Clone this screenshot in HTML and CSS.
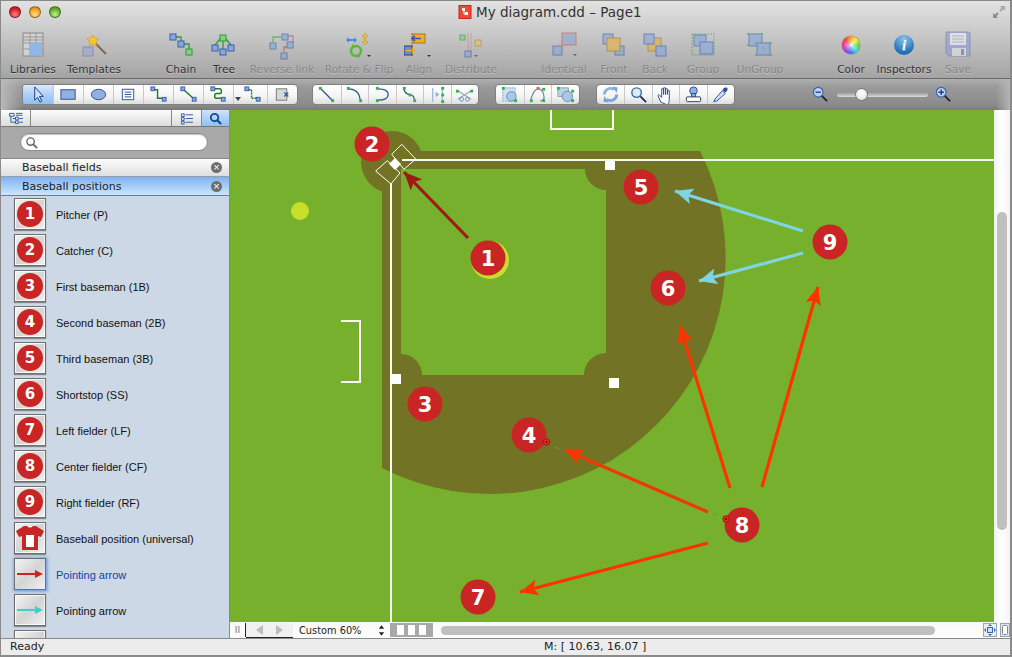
FILE: index.html
```html
<!DOCTYPE html>
<html lang="en">
<head>
<meta charset="utf-8">
<title>My diagram.cdd - Page1</title>
<link rel="stylesheet" href="styles.css">
</head>
<body>
<div class="window">
  <header class="chrome">
    <div class="titlebar">
      <span class="light red"></span><span class="light yellow"></span><span class="light green"></span>
      <svg class="docicon" viewBox="0 0 14 14"><rect x="1" y="0.5" width="12" height="13" fill="#ee4a33" stroke="#c22"/><path d="M4 3h3v3H4zM7 7h3v3H7z" fill="#fff"/><path d="M6 6v3h1" stroke="#fff" fill="none"/></svg>
      <span class="doctitle">My diagram.cdd – Page1</span>
      <svg class="expand" viewBox="0 0 14 14"><path d="M8 1h5v5l-1.7-1.7-2.5 2.5-1.6-1.6 2.5-2.5z" fill="#a9a9a9"/><path d="M6 13H1V8l1.7 1.7 2.5-2.5 1.6 1.6-2.500 2.500z" fill="#8c8c8c"/></svg>
    </div>
    <div class="tools">
      <div class="tool t-lib"><svg viewBox="0 0 30 30"><rect x="5" y="3" width="20" height="23" fill="#d2d2d2" stroke="#8a8a8a"/><path d="M5 7h20M5 10h20M5 13h20M12 3v23M18 3v23M5 19h20" stroke="#999" fill="none"/><path d="M12 13h6v6h-6zM18 13h6v6h-6zM12 19h6v6h-6zM18 19h6v6h-6z" fill="#8fb6e8"/></svg><span>Libraries</span></div>
      <div class="tool t-tem"><svg viewBox="0 0 30 30"><rect x="4" y="17" width="10" height="9" fill="#a5aecb" stroke="#8a90a8"/><path d="M15 12l12 12" stroke="#7a6a55" stroke-width="2"/><path d="M14 5l2 3 4 1-3 3 .5 4-3.500-2-3.500 2 .5-4-3-3 4-1z" fill="#f5c430" stroke="#c88a10" stroke-width=".5"/><circle cx="21" cy="5" r="1" fill="#9cd"/><circle cx="24" cy="11" r="1" fill="#9cd"/></svg><span>Templates</span></div>
      <div class="tool t-cha"><svg viewBox="0 0 30 30"><path d="M10 7h5v5M18 14h5v5" fill="none" stroke="#2f9a3a" stroke-width="1.300"/><rect class="bl" x="4" y="4" width="6" height="6"/><rect class="bl" x="12" y="11" width="6" height="6"/><rect class="gr" x="20" y="19" width="6" height="6"/></svg><span>Chain</span></div>
      <div class="tool t-tre"><svg viewBox="0 0 30 30"><path d="M14 11v8M11 9L6 15M17 9l5 6" fill="none" stroke="#2f9a3a" stroke-width="1.300"/><rect class="gr" x="11" y="5" width="6" height="6"/><rect class="bl" x="3" y="15" width="6" height="6"/><rect class="bl" x="11" y="19" width="6" height="6"/><rect class="bl" x="19" y="15" width="6" height="6"/></svg><span>Tree</span></div>
      <div class="tool off t-rev"><svg viewBox="0 0 30 30"><path d="M6 12V7h8" fill="none" stroke="#3aa15a" stroke-width="1.300"/><path d="M21 6h5v7" fill="none" stroke="#c04fa0" stroke-width="1.300"/><path d="M24 17h-7v5" fill="none" stroke="#d0502a" stroke-width="1.300"/><rect class="bl" x="3" y="13" width="6" height="6"/><rect class="bl" x="15" y="4" width="6" height="6"/><rect class="bl" x="20" y="12" width="6" height="6"/><rect class="bl" x="14" y="23" width="6" height="6"/></svg><span>Reverse link</span></div>
      <div class="tool dim t-rot"><svg viewBox="0 0 30 30"><path d="M2 10l3-3v2h5V7l3 3-3 3v-2H5v2z" fill="#4a8ad8"/><path d="M21 3l3 3h-2v6h2l-3 3-3-3h2V6h-2z" fill="#f0c040" stroke="#b98a20" stroke-width=".5"/><circle cx="12" cy="21" r="5" fill="none" stroke="#5cb83c" stroke-width="2.500"/><path d="M8 14l4 2-3 3zM16 28l-4-2 3-3z" fill="#5cb83c"/><path class="tri" d="M23 25h4l-2 2z"/></svg><span>Rotate &amp; Flip</span></div>
      <div class="tool dim t-ali"><svg viewBox="0 0 30 30"><path d="M8 3v24" stroke="#d04040" stroke-dasharray="2 1"/><rect x="9" y="4" width="12" height="9" fill="#f0b020" stroke="#a87a10"/><path d="M17 8.500H8M11 6l-3 2.500 3 2.500" fill="none" stroke="#2a5faa" stroke-width="1.500"/><rect x="0" y="16" width="8" height="9" fill="#6a8fd0" stroke="#345"/><path d="M2 20.500h8M8 18l3 2.500-3 2.500" fill="none" stroke="#f0b020" stroke-width="1.500"/><path class="tri" d="M23 25h4l-2 2z"/></svg><span>Align</span></div>
      <div class="tool off t-dis"><svg viewBox="0 0 30 30"><path d="M12 3v24M15 3v24" stroke="#c88" fill="none"/><rect class="gr" x="4" y="5" width="5" height="5"/><rect x="19" y="10" width="6" height="6" fill="#e8c060" stroke="#b08a30"/><rect class="bl" x="9" y="21" width="6" height="6"/><path class="tri" d="M18 25h4l-2 2z"/></svg><span>Distribute</span></div>
      <div class="tool off t-ide"><svg viewBox="0 0 30 30"><path d="M8 21L20 8" stroke="#e5b090" stroke-width="8"/><rect x="13" y="3" width="14" height="12" fill="#8fa8d0" stroke="#c05a4a"/><rect class="bl" x="4" y="16" width="9" height="9"/><path class="tri" d="M24 24h4l-2 2z"/></svg><span>Identical</span></div>
      <div class="tool off t-fro"><svg viewBox="0 0 30 30"><rect class="bl" x="4" y="4" width="10" height="10"/><rect class="bl" x="16" y="16" width="9" height="9"/><rect x="8" y="8" width="13" height="13" fill="#e8b040" stroke="#a87a10"/></svg><span>Front</span></div>
      <div class="tool off t-bac"><svg viewBox="0 0 30 30"><rect x="8" y="8" width="13" height="13" fill="#e8b040" stroke="#a87a10"/><rect class="bl" x="4" y="4" width="10" height="10"/><rect class="bl" x="16" y="16" width="10" height="10"/></svg><span>Back</span></div>
      <div class="tool off t-gro"><svg viewBox="0 0 30 30"><rect x="4" y="4" width="22" height="21" fill="none" stroke="#3fa84a" stroke-dasharray="2 1"/><rect class="bl" x="6" y="5" width="12" height="11"/><rect class="bl" x="12" y="12" width="13" height="12"/></svg><span>Group</span></div>
      <div class="tool off t-ung"><svg viewBox="0 0 30 30"><rect class="bl" x="4" y="4" width="13" height="12"/><rect class="bl" x="12" y="13" width="13" height="12"/><path d="M2 4h3M15 4h3M2 15h3M10 13h3M24 13h3M10 25h3M24 25h3" stroke="#3fa84a" stroke-width="2"/><circle cx="18" cy="18" r="1" fill="#3a3"/></svg><span>UnGroup</span></div>
      <div class="tool t-col"><span class="wheel"></span><span>Color</span></div>
      <div class="tool t-ins"><span class="info">i</span><span>Inspectors</span></div>
      <div class="tool off t-sav"><svg viewBox="0 0 30 30"><path d="M3 2h23l1 1v23H6l-3-3z" fill="#8c9bd6" stroke="#6a78b5"/><rect x="7" y="3" width="16" height="12" fill="#eef0f5"/><path d="M9 6h12M9 9h12M9 12h12" stroke="#9aa6c8"/><rect x="9" y="18" width="14" height="8" fill="#dfe3ee"/><rect x="18" y="19" width="3" height="6" fill="#7080b0"/></svg><span>Save</span></div>
    </div>
  </header>

  <div class="formatbar">
    <div class="fgroup">
      <span class="fb sel"><svg viewBox="0 0 20 20"><path d="M6 2v14l3-3 2.500 5 2-1-2.500-5h4z" fill="#cfe0f7" stroke="#1c3b8c"/></svg></span>
      <span class="fb"><svg viewBox="0 0 20 20"><rect x="2" y="5" width="15" height="10" fill="#8fb0e0" stroke="#2a4f95"/></svg></span>
      <span class="fb"><svg viewBox="0 0 20 20"><ellipse cx="10" cy="10" rx="7.500" ry="5.500" fill="#8fb0e0" stroke="#2a4f95"/></svg></span>
      <span class="fb"><svg viewBox="0 0 20 20"><rect x="3.500" y="4.500" width="12" height="11" fill="#fff" stroke="#2a4f95"/><path d="M6 7.500h7M6 10h7M6 12.500h7" stroke="#2a4f95"/></svg></span>
      <span class="fb"><svg viewBox="0 0 20 20"><path d="M6 5h3v9h5" fill="none" stroke="#1e7a2c" stroke-width="1.500"/><rect class="bl" x="2" y="2" width="4" height="4"/><rect class="bl" x="14" y="13" width="4" height="4"/></svg></span>
      <span class="fb"><svg viewBox="0 0 20 20"><path d="M5 5l10 9" fill="none" stroke="#1e7a2c" stroke-width="1.500"/><rect class="bl" x="2" y="2" width="4" height="4"/><rect class="bl" x="14" y="13" width="4" height="4"/></svg></span>
      <span class="fb"><svg viewBox="0 0 20 20"><path d="M6 4h5q2 0 2 2v1q0 2-2 2H8q-2 0-2 2v1q0 2 2 2h5" fill="none" stroke="#1e7a2c" stroke-width="1.500"/><rect class="bl" x="2" y="2" width="4" height="4"/><rect class="bl" x="13" y="13" width="4" height="4"/></svg></span>
      <span class="fb fb-drop"><svg class="dropmark" viewBox="0 0 6 6"><path d="M0 1h6L3 5z" fill="#444"/></svg><svg viewBox="0 0 20 20"><path d="M6 5h3v9h5" fill="none" stroke="#1e7a2c" stroke-dasharray="2 1" stroke-width="1.500"/><rect class="bl" x="2" y="2" width="4" height="4"/><rect class="bl" x="14" y="13" width="4" height="4"/></svg></span>
      <span class="fb"><svg viewBox="0 0 20 20"><rect x="3.500" y="4" width="11" height="12" fill="#d8d8d8" stroke="#777"/><path d="M12 8l4 4m0-4l-4 4" stroke="#1a5fc0" stroke-width="1.500"/></svg></span>
    </div>
    <div class="fgroup g2">
      <span class="fb n"><svg viewBox="0 0 20 20"><path d="M4 4l12 12" stroke="#26508f" stroke-width="1.300"/><rect class="hd" x="2" y="2" width="3" height="3"/><rect class="hd" x="15" y="15" width="3" height="3"/></svg></span>
      <span class="fb n"><svg viewBox="0 0 20 20"><path d="M3 4q12 0 13 12" fill="none" stroke="#26508f" stroke-width="1.300"/><rect class="hd" x="2" y="2" width="3" height="3"/><rect class="hd" x="15" y="15" width="3" height="3"/></svg></span>
      <span class="fb n"><svg viewBox="0 0 20 20"><path d="M5 4q11 0 11 6t-11 6" fill="none" stroke="#26508f" stroke-width="1.300"/><rect class="hd" x="3" y="2" width="3" height="3"/><rect class="hd" x="3" y="15" width="3" height="3"/></svg></span>
      <span class="fb n"><svg viewBox="0 0 20 20"><path d="M4 4q1 5 6 6t5 5" fill="none" stroke="#26508f" stroke-width="1.300"/><rect class="hd" x="3" y="2" width="3" height="3"/><rect class="hd" x="9" y="9" width="3" height="3"/><rect class="hd" x="14" y="15" width="3" height="3"/></svg></span>
      <span class="fb n"><svg viewBox="0 0 20 20"><path d="M5 3v15M15 3v15" stroke="#8fb0d8" stroke-width="1.200"/><path d="M8 7l4 3-4 3z" fill="#8fb0d8"/><rect class="hd" x="14" y="2" width="3" height="3"/><rect class="hd" x="14" y="9" width="3" height="3"/><rect class="hd" x="14" y="16" width="3" height="3"/></svg></span>
      <span class="fb n"><svg viewBox="0 0 20 20"><path d="M3 6l14 9M17 6L3 15" stroke="#9aa8b8" stroke-width="1.300"/><circle cx="7" cy="15" r="2" fill="none" stroke="#6a8ab0"/><circle cx="13" cy="15" r="2" fill="none" stroke="#6a8ab0"/><rect class="hd" x="1" y="5" width="3" height="3"/><rect class="hd" x="16" y="5" width="3" height="3"/></svg></span>
    </div>
    <div class="fgroup g3">
      <span class="fb n"><svg viewBox="0 0 20 20"><rect x="3" y="3" width="13" height="14" fill="#cfe0ee" stroke="#7fa8b8" stroke-dasharray="2 1"/><circle cx="12" cy="12" r="5" fill="#a8c8e8" stroke="#6a8ab0"/><rect class="hd" x="2" y="2" width="3" height="3"/><rect class="hd" x="15" y="15" width="3" height="3"/></svg></span>
      <span class="fb n"><svg viewBox="0 0 20 20"><path d="M3 15Q6 4 11 4t6 9q0 3-4 4" fill="none" stroke="#6a8ab0" stroke-width="1.300"/><rect x="9" y="2" width="3" height="3" fill="#e06050"/><rect class="hd" x="2" y="15" width="3" height="3"/><rect class="hd" x="15" y="15" width="3" height="3"/><rect class="hd" x="15" y="3" width="3" height="3"/></svg></span>
      <span class="fb n"><svg viewBox="0 0 20 20"><rect x="2" y="3" width="11" height="9" fill="#bcd4e4" stroke="#7fa8b8"/><circle cx="12" cy="12" r="5.500" fill="#a8c8e8" stroke="#6a8ab0"/><rect class="hd" x="1" y="2" width="3" height="3"/><rect class="hd" x="16" y="5" width="3" height="3"/><rect class="hd" x="16" y="15" width="3" height="3"/></svg></span>
    </div>
    <div class="fgroup g4">
      <span class="fb n"><svg viewBox="0 0 20 20"><path d="M3.500 10a6.500 6.500 0 0 1 10.500-5" fill="none" stroke="#8fb4dc" stroke-width="3"/><path d="M16.500 10a6.500 6.500 0 0 1-10.500 5" fill="none" stroke="#7aa4d4" stroke-width="3"/><path d="M12 1.500l5.500 1-1 6zM8 18.500l-5.500-1 1-6z" fill="#7aa4d4"/></svg></span>
      <span class="fb n"><svg viewBox="0 0 20 20"><circle cx="8" cy="8" r="5" fill="#dfeafa" stroke="#3d6aa8" stroke-width="1.500"/><path d="M12 12l6 6" stroke="#23324f" stroke-width="2"/></svg></span>
      <span class="fb n"><svg viewBox="0 0 20 20"><path d="M5 18L2 11l1-1 3 3V4h2v6-7h2v7-6h2v6-4h2v9q0 4-2 6z" fill="#fff" stroke="#2a4f95"/></svg></span>
      <span class="fb n"><svg viewBox="0 0 20 20"><circle cx="10" cy="6" r="4" fill="#8fb0e0" stroke="#2a4f95"/><rect x="8" y="9" width="4" height="4" fill="#8fb0e0" stroke="#2a4f95"/><rect x="2.500" y="12.500" width="15" height="5" rx="1" fill="#fff" stroke="#2a3a60"/></svg></span>
      <span class="fb n"><svg viewBox="0 0 20 20"><path d="M4 17l-1 1 1-3 8-9 3 3-9 8z" fill="#cfe0f7" stroke="#2a4f95"/><path d="M12 5l2-2q2-1 3 0t0 3l-2 2z" fill="#2a4f95"/></svg></span>
    </div>
    <div class="zoombar">
      <svg class="zicon" viewBox="0 0 18 18"><circle cx="7" cy="7" r="5.500" fill="#b9cff0" stroke="#3a62a8" stroke-width="1.300"/><path d="M4 7h6" stroke="#1c3b8c" stroke-width="1.500"/><path d="M11 11l6 6" stroke="#1b2438" stroke-width="2"/></svg>
      <div class="ztrack"><span class="zknob"></span></div>
      <svg class="zicon" viewBox="0 0 18 18"><circle cx="7" cy="7" r="5.500" fill="#b9cff0" stroke="#3a62a8" stroke-width="1.300"/><path d="M4 7h6M7 4v6" stroke="#1c3b8c" stroke-width="1.500"/><path d="M11 11l6 6" stroke="#1b2438" stroke-width="2"/></svg>
    </div>
  </div>

  <div class="main">
    <aside class="sidebar">
      <div class="tabs">
        <span class="tab t1"><svg viewBox="0 0 18 14"><path d="M2.500 1.500h5v3h-5zM6 7h3M6 11h3M4 4v7h2" fill="none" stroke="#2a5aa0"/><path d="M9.500 1.500h7M9.500 3.500h7" stroke="#2a5aa0"/><path d="M9 5.500h3v3H9zM9 9.500h3v3H9zM13 7h4M13 11h4" fill="none" stroke="#2a5aa0"/></svg></span>
        <span class="tab t2"></span>
        <span class="tab t3"><svg viewBox="0 0 14 14"><path d="M1.500 2h3v3h-3zM1.500 6h3v3h-3zM1.500 10h3v3h-3z" fill="none" stroke="#2a5aa0"/><path d="M6 3h8M6 7h8M6 11h8" stroke="#2a5aa0"/></svg></span>
        <span class="tab t4"><svg viewBox="0 0 14 14"><circle cx="6" cy="6" r="4" fill="none" stroke="#1a4a96" stroke-width="2"/><path d="M9 9l4 4" stroke="#1a4a96" stroke-width="2.400"/></svg></span>
      </div>
      <div class="searchband">
        <div class="searchbox"><svg viewBox="0 0 14 14"><circle cx="6" cy="6" r="4" fill="none" stroke="#666" stroke-width="1.500"/><path d="M9 9l4 4" stroke="#666" stroke-width="2"/></svg></div>
      </div>
      <div class="libhead"><span>Baseball fields</span><i class="closex">×</i></div>
      <div class="libhead active"><span>Baseball positions</span><i class="closex">×</i></div>
      <ul class="items">
        <li><span class="thumb"><b>1</b></span>Pitcher (P)</li>
        <li><span class="thumb"><b>2</b></span>Catcher (C)</li>
        <li><span class="thumb"><b>3</b></span>First baseman (1B)</li>
        <li><span class="thumb"><b>4</b></span>Second baseman (2B)</li>
        <li><span class="thumb"><b>5</b></span>Third baseman (3B)</li>
        <li><span class="thumb"><b>6</b></span>Shortstop (SS)</li>
        <li><span class="thumb"><b>7</b></span>Left fielder (LF)</li>
        <li><span class="thumb"><b>8</b></span>Center fielder (CF)</li>
        <li><span class="thumb"><b>9</b></span>Right fielder (RF)</li>
        <li><span class="thumb"><svg viewBox="0 0 30 30"><path d="M9 3h12l8 5-3 6-3-1v14H7V13l-3 1-3-6z" fill="#c92525"/><path d="M11 12h8v12h-8zM12 3q3 3 6 0z" fill="#fff"/></svg></span>Baseball position (universal)</li>
        <li class="picked"><span class="thumb"><svg viewBox="0 0 30 30"><path d="M2 15h20" stroke="#c92525" stroke-width="2"/><path d="M20 11l8 4-8 4z" fill="#c92525"/></svg></span>Pointing arrow</li>
        <li><span class="thumb"><svg viewBox="0 0 30 30"><path d="M2 15h20" stroke="#3ccfcf" stroke-width="2"/><path d="M20 11l8 4-8 4z" fill="#3ccfcf"/></svg></span>Pointing arrow</li>
        <li><span class="thumb"></span></li>
      </ul>
    </aside>

    <div class="workspace">
      <div class="canvasrow">
        <svg class="canvas" viewBox="230 110 764 512">
          <defs>
            <marker id="hdark" markerUnits="userSpaceOnUse" markerWidth="20" markerHeight="16" refX="18" refY="8" orient="auto"><path d="M0 0l18 8-18 8 4-8z" fill="#a01a15"/></marker>
            <marker id="hcyan" markerUnits="userSpaceOnUse" markerWidth="20" markerHeight="16" refX="18" refY="8" orient="auto"><path d="M0 0l18 8-18 8 4-8z" fill="#7ed4e0"/></marker>
            <marker id="hred" markerUnits="userSpaceOnUse" markerWidth="20" markerHeight="16" refX="18" refY="8" orient="auto"><path d="M0 0l18 8-18 8 4-8z" fill="#ff3300"/></marker>
          </defs>
          <circle class="dirt" cx="392" cy="162" r="31"/>
          <path class="dirt" d="M382 151H700A236 236 0 0 1 382 468Z"/>
          <path class="grass" d="M401 169H585A21 21 0 0 0 606 190V353A22 22 0 0 0 584 375H422A21 21 0 0 0 401 354Z"/>
          <path class="chalk" d="M551 110V129H613V110M341 321H360V382H341"/>
          <path class="chalk" d="M402 160H994"/>
          <path class="chalk" d="M391 183V622"/>
          <path class="box" d="M401.700 144.300L415.700 159L404 169.300L391.700 154.300Z"/>
          <path class="box" d="M387.300 160.700L400 173L391 184L375.700 171Z"/>
          <path class="base" d="M395 158l6 6-6 6-6-6z"/>
          <rect class="base" x="605" y="161" width="10" height="9"/>
          <rect class="base" x="391" y="374" width="10" height="10"/>
          <rect class="base" x="609" y="378" width="10" height="10"/>
          <circle class="ball" cx="300" cy="211" r="9"/>
          <circle class="ball" cx="490" cy="260" r="19"/>
          <path class="arrow" stroke="#a01a15" marker-end="url(#hdark)" d="M468 238L404 172"/>
          <path class="arrow" stroke="#7ed4e0" marker-end="url(#hcyan)" d="M803 231L675 191"/>
          <path class="arrow" stroke="#7ed4e0" marker-end="url(#hcyan)" d="M803 253L699 281"/>
          <path class="arrow" stroke="#ff3300" marker-end="url(#hred)" d="M730 488L680 326"/>
          <path class="arrow" stroke="#ff3300" marker-end="url(#hred)" d="M762 487L818 287"/>
          <path class="arrow" stroke="#ff3300" marker-end="url(#hred)" d="M708 512L565 450"/>
          <path class="seldash" d="M706 511L580 456"/>
          <path class="arrow" stroke="#ff3300" marker-end="url(#hred)" d="M708 543L520 592"/>
          <path class="dash" d="M555 447L560 449M713 514L716 515"/>
          <g class="pos"><circle cx="488" cy="258" r="17.500"/><text x="488" y="265.500">1</text></g>
          <g class="pos"><circle cx="372" cy="144" r="17.500"/><text x="372" y="151.500">2</text></g>
          <g class="pos"><circle cx="425" cy="404" r="17.500"/><text x="425" y="411.500">3</text></g>
          <g class="pos"><circle cx="529" cy="435" r="17.500"/><text x="529" y="442.500">4</text></g>
          <g class="pos"><circle cx="641" cy="187" r="17.500"/><text x="641" y="194.500">5</text></g>
          <g class="pos"><circle cx="668" cy="288" r="17.500"/><text x="668" y="295.500">6</text></g>
          <g class="pos"><circle cx="478" cy="597" r="17.500"/><text x="478" y="604.500">7</text></g>
          <g class="pos"><circle cx="742" cy="525" r="17.500"/><text x="742" y="532.500">8</text></g>
          <g class="pos"><circle cx="830" cy="242" r="17.500"/><text x="830" y="249.500">9</text></g>
          <circle class="handle" cx="546.500" cy="442" r="3.200"/><circle class="handle-c" cx="546.500" cy="442" r="1.200"/>
          <circle class="handle" cx="726" cy="519" r="3.200"/><circle class="handle-c" cx="726" cy="519" r="1.200"/>
        </svg>
        <div class="vscroll"><span class="vthumb"></span></div>
      </div>
      <div class="hbar">
        <span class="pause">II</span>
        <span class="pager"><i class="pl"></i><i class="pr"></i></span>
        <span class="zoomsel">Custom 60%<svg viewBox="0 0 8 14"><path d="M4 1l3 4H1zM4 13l3-4H1z" fill="#222"/></svg></span>
        <span class="views"><i></i><i></i><i></i></span>
        <span class="htrack"><span class="hthumb"></span></span>
        <svg class="fit" viewBox="0 0 14 14"><rect x="0.500" y="0.500" width="13" height="13" fill="#e8eef5" stroke="#9aa6b4"/><rect x="4.500" y="4.500" width="5" height="5" fill="#cfe0f2" stroke="#2a6ab0"/><path d="M7 1l2 2H5zM7 13l2-2H5zM1 7l2-2v4zM13 7l-2-2v4z" fill="#2a6ab0"/></svg>
        <svg class="fit" viewBox="0 0 10 14"><rect x="0.500" y="0.500" width="9" height="13" fill="#dde3ea" stroke="#9aa6b4"/><rect x="2.500" y="2.500" width="5" height="9" rx="1" fill="#fff" stroke="#889"/></svg>
      </div>
    </div>
  </div>

  <footer class="status"><span class="ready">Ready</span><span class="coords">M: [ 10.63, 16.07 ]</span></footer>
</div>
</body>
</html>
```

FILE: styles.css
```css
* { box-sizing: border-box; }
html, body { margin: 0; padding: 0; }
body { width: 1012px; height: 657px; overflow: hidden; font-family: "DejaVu Sans", sans-serif; font-size: 11px; color: #222; background: #fff; }
.window { width: 1012px; height: 657px; display: flex; flex-direction: column; border: 1px solid #8a8a8a; border-width: 1px 2px 2px 1px; overflow: hidden; background: #ececec; }
svg { display: block; }
.bl { fill: #86a8dc; stroke: #3a5fa8; }
.gr { fill: #7ed37e; stroke: #2f9a3a; }
.hd { fill: #35b04a; }
.tri { fill: #333; }

/* title + toolbar */
.chrome { height: 77px; flex: none; background: linear-gradient(#e2e2e2, #d0d0d0 30%, #a4a4a4); }
.titlebar { height: 22px; display: flex; align-items: center; padding-left: 8px; }
.light { width: 12px; height: 12px; border-radius: 50%; margin-right: 8px; border: 1px solid rgba(0,0,0,.35); }
.light.red { background: radial-gradient(circle at 50% 75%, #ff8a80, #d8232a 60%, #9a1116); }
.light.yellow { background: radial-gradient(circle at 50% 75%, #ffe08a, #eca024 60%, #a86a10); }
.light.green { background: radial-gradient(circle at 50% 75%, #c8f08a, #69ad33 60%, #3e7a16); }
.docicon { width: 14px; height: 14px; margin-left: 389px; flex: none; }
.doctitle { margin-left: 4px; font-size: 13.500px; color: #333; white-space: nowrap; }
.expand { width: 14px; height: 14px; margin-left: auto; margin-right: 4px; }
.tools { display: flex; height: 55px; align-items: flex-start; padding-top: 7px; }
.tool { flex: none; display: flex; flex-direction: column; align-items: center; color: #333; font-size: 10.600px; white-space: nowrap; text-shadow: 0 1px 0 rgba(255,255,255,.3); }
.tool svg { width: 30px; height: 30px; }
.tool > span:last-child { margin-top: 2px; line-height: 14px; }
.tool.off, .tool.dim { color: #858585; }
.tool.off svg { opacity: .62; }
.t-lib { width: 50px; margin-left: 7px; }
.t-tem { width: 60px; margin-left: 6px; }
.t-cha { width: 34px; margin-left: 40px; }
.t-tre { width: 36px; margin-left: 8px; }
.t-rev { width: 68px; margin-left: 6px; }
.t-rot { width: 72px; margin-left: 7px; }
.t-ali { width: 32px; margin-left: 8px; }
.t-dis { width: 56px; margin-left: 8px; }
.t-ide { width: 48px; margin-left: 41px; }
.t-fro { width: 32px; margin-left: 10px; }
.t-bac { width: 32px; margin-left: 9px; }
.t-gro { width: 36px; margin-left: 14px; }
.t-ung { width: 50px; margin-left: 14px; }
.t-col { width: 34px; margin-left: 49px; }
.t-ins { width: 58px; margin-left: 7px; }
.t-sav { width: 30px; margin-left: 10px; }
.wheel { width: 18px; height: 18px; margin: 6px 6px; border-radius: 50%; background: radial-gradient(circle, #fff 0, rgba(255,255,255,.6) 15%, rgba(255,255,255,0) 65%), conic-gradient(#ff9a1e, #ffe81e, #4ed82e, #2ee0d8, #2a6ef0, #a02ee0, #f02ea0, #ff3020, #ff9a1e); box-shadow: 0 0 0 .5px rgba(0,0,0,.3); }
.info { width: 20px; height: 20px; margin: 5px; border-radius: 50%; background: radial-gradient(circle at 50% 20%, #8cc4ee, #2372b8 70%, #145a9c); color: #fff; font: italic bold 15px/20px "Liberation Serif", serif; text-align: center; }

/* format bar */
.formatbar { height: 32px; flex: none; display: flex; align-items: flex-start; padding: 5px 0 0 21px; border-top: 1px solid #6a6a6a; background: linear-gradient(90deg, #b8b8b8, rgba(184,184,184,0) 22px), linear-gradient(270deg, #b4b4b4, rgba(180,180,180,0) 14px), linear-gradient(#b0b0b0, #9a9a9a 25%, #8a8a8a 85%, #7a7a7a); }
.fgroup { height: 21px; display: flex; align-items: center; background: linear-gradient(#fff, #f4f4f4 60%, #dedede); border: 1px solid #808080; border-radius: 4px; flex: none; overflow: hidden; }
.g2 { margin-left: 14px; }
.g3 { margin-left: 16px; }
.g4 { margin-left: 16px; }
.fb { width: 30px; height: 19px; flex: none; display: flex; align-items: center; justify-content: center; border-left: 1px solid #c8c8c8; }
.fb:first-child { border-left: 0; }
.fb.n { width: 27.500px; }
.fb svg { width: 19px; height: 19px; flex: none; }
.fb.sel { background: linear-gradient(#dbe9fb, #a9cdf6 55%, #8fc0f5); }
.fb-drop { width: 34px; justify-content: flex-end; padding-right: 5px; }
.fb svg.dropmark { width: 6px; height: 6px; margin: 8px 2px 0 0; }
.zoombar { display: flex; align-items: center; height: 20px; margin-left: 77px; }
.zicon { width: 16px; height: 16px; flex: none; }
.ztrack { width: 91px; height: 5px; margin: 0 7px 0 9px; border-radius: 3px; background: linear-gradient(#8f8f8f, #dcdcdc); position: relative; }
.zknob { position: absolute; left: 18px; top: -4px; width: 13px; height: 13px; border-radius: 50%; background: radial-gradient(circle at 50% 35%, #fff, #dcdcdc); border: 1px solid #777; }

/* main */
.main { flex: 1; min-height: 0; display: flex; }
.sidebar { width: 229px; flex: none; display: flex; flex-direction: column; background: #ccd8e5; border-right: 1px solid #8a8a8a; overflow: hidden; }
.tabs { height: 17px; flex: none; display: flex; background: linear-gradient(#fcfcfc, #dcdcdc); border-bottom: 1px solid #777; }
.tab { display: flex; align-items: center; justify-content: center; border-right: 1px solid #888; }
.t1 { width: 30px; } .t1 svg { width: 17px; height: 13px; }
.t2 { width: 141px; }
.t3 { width: 30px; } .t3 svg { width: 13px; height: 13px; }
.t4 { flex: 1; border-right: 0; background: linear-gradient(#cfe3fb, #8fc0f5); } .t4 svg { width: 13px; height: 13px; }
.searchband { height: 32px; flex: none; padding: 6px 21px 0 19px; background: #a9a9a9; border-bottom: 1px solid #8a8a8a; }
.searchbox { height: 18px; border-radius: 9px; background: #fff; border: 1px solid #8c8c8c; box-shadow: inset 0 1px 1px rgba(0,0,0,.25); padding: 2px 0 0 4px; }
.searchbox svg { width: 13px; height: 13px; }
.libhead { height: 18px; flex: none; display: flex; align-items: center; justify-content: space-between; padding: 0 7px 0 21px; background: linear-gradient(#fdfdfd, #dedede); border-bottom: 1px solid #8fa0b0; color: #222; }
.libhead.active { height: 19px; background: linear-gradient(#80b2f0, #cbe6ff); border-bottom: 1px solid #7a7a7a; }
.closex { width: 11px; height: 11px; border-radius: 50%; background: #6e6e6e; color: #fff; font: normal 11px/11px "Liberation Sans", sans-serif; text-align: center; }
.items { list-style: none; margin: 0; padding: 2px 0 0 13px; flex: 1; min-height: 0; overflow: hidden; font: 11px/34px "Liberation Sans", sans-serif; color: #111; }
.items li { height: 36px; display: flex; align-items: flex-start; }
.thumb { width: 32px; height: 32px; flex: none; margin-right: 10px; display: flex; align-items: center; justify-content: center; background: linear-gradient(135deg, #f4f4f4, #d4d4d4 50%, #f0f0f0); border: 1px solid #707070; box-shadow: inset 0 0 0 1px rgba(255,255,255,.7), 0 1px 1px #888; }
.thumb b { width: 26px; height: 26px; border-radius: 50%; background: #c92525; color: #fff; font: bold 15px/26px "DejaVu Sans", sans-serif; text-align: center; }
.thumb svg { width: 30px; height: 30px; }
.picked { color: #1440a8; }
.picked .thumb { box-shadow: 0 0 3px 1.500px #5d9cf0; }

/* canvas */
.workspace { flex: 1; min-width: 0; display: flex; flex-direction: column; background: #fff; }
.canvasrow { flex: 1; min-height: 0; display: flex; }
.canvas { width: 764px; height: 512px; flex: none; background: #76b02c; }
.dirt { fill: #737325; }
.grass { fill: #76b02c; }
.chalk { fill: none; stroke: #fff; stroke-width: 2; opacity: .95; }
.box { fill: none; stroke: #fff; stroke-width: 1; }
.base { fill: #fff; }
.ball { fill: #c6df2a; }
.arrow { fill: none; stroke-width: 3.200; }
.seldash { fill: none; stroke: #b8501a; stroke-width: 1; stroke-dasharray: 3 2; }
.dash { fill: none; stroke: #35b04a; stroke-width: 1; }
.pos circle { fill: #c92525; }
.pos text { fill: #fff; font: bold 21px "DejaVu Sans", sans-serif; text-anchor: middle; }
.handle { fill: #e83020; stroke: #8a1010; stroke-width: .8; }
.handle-c { fill: #701010; }
.vscroll { flex: 1; position: relative; background: linear-gradient(90deg, #f0f0f0, #fff 40%, #f4f4f4); }
.vthumb { position: absolute; left: 3px; top: 102px; width: 10px; height: 318px; border-radius: 5px; background: #bfbfbf; }
.hbar { height: 16px; flex: none; display: flex; align-items: center; background: linear-gradient(#f8f8f8, #fff); }
.pause { width: 16px; text-align: center; color: #777; font-size: 9px; border-right: 1px solid #222; line-height: 14px; height: 14px; }
.pager { width: 47px; height: 15px; display: flex; align-items: center; justify-content: space-around; padding: 0 4px; border-bottom: 1px solid #222; background: #f0f0f0; }
.pl { border: 5px solid transparent; border-left: 0; border-right: 7px solid #bbb; }
.pr { border: 5px solid transparent; border-right: 0; border-left: 7px solid #bbb; }
.zoomsel { width: 97px; display: flex; align-items: center; justify-content: space-between; padding: 0 5px 0 6px; color: #222; font-size: 9.800px; white-space: nowrap; }
.zoomsel svg { width: 7px; height: 13px; }
.views { width: 43px; height: 14px; display: flex; align-items: center; justify-content: center; gap: 4px; background: #a8a8a8; }
.views i { width: 7px; height: 10px; background: #fff; }
.htrack { width: 547px; height: 12px; padding-left: 8px; display: flex; align-items: center; }
.hthumb { width: 494px; height: 9px; border-radius: 5px; background: #bfbfbf; }
.fit { width: 14px; height: 14px; flex: none; margin-left: 3px; }
.fit:last-child { width: 10px; }

/* status */
.status { height: 17px; flex: none; display: flex; align-items: center; padding: 0 0 2px 9px; border-top: 1px solid #8a8a8a; background: #ececec; color: #222; }
.ready { width: 534px; flex: none; }
.coords { white-space: nowrap; }
```
